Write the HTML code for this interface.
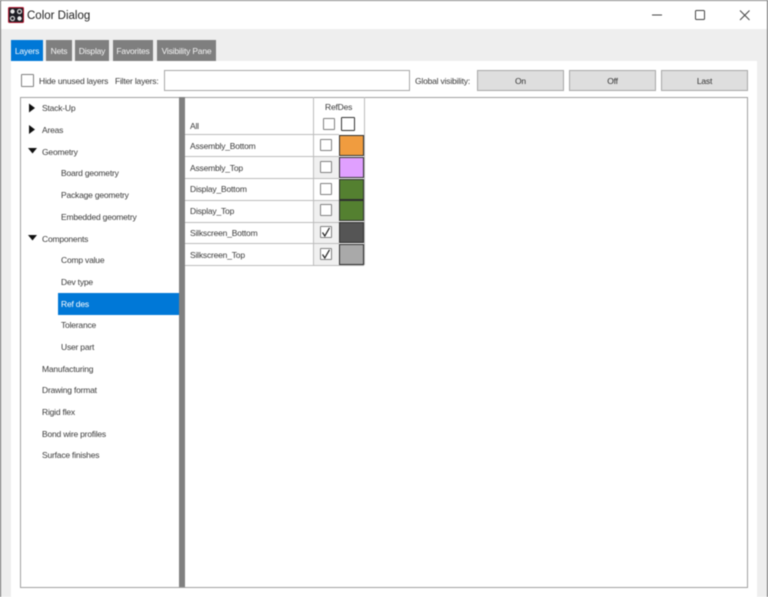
<!DOCTYPE html>
<html>
<head>
<meta charset="utf-8">
<title>Color Dialog</title>
<style>
html,body{margin:0;padding:0;width:768px;height:597px;overflow:hidden;background:#fff}
body{position:relative;font-family:"Liberation Sans",sans-serif;font-size:8.5px;letter-spacing:-.2px;color:#3a3a3a}
div,span,svg{position:absolute;box-sizing:border-box}
#w{left:0;top:0;width:768px;height:597px;background:#fff;filter:blur(.4px)}
.t{white-space:nowrap;line-height:12px}
.tab{top:40px;height:21px;background:#7f7f7f;color:#f4f4f4;text-align:center;line-height:22px}
.btn{top:70px;height:21px;background:#dedede;border:1px solid #a8a8a8;text-align:center;line-height:20px;color:#333}
.cb{width:12px;height:12px;background:#fff;border:1px solid #808080;border-radius:1px}
.line{background:#bcbcbc}
.sw{left:339px;width:24.500px;height:21px;border:1.5px solid #2f2f2f}
.cell{left:314px;width:25px;height:21px;background:#f0f0f0}
</style>
</head>
<body>
<div id="w">
<!-- window chrome -->
<div style="left:0;top:29px;width:768px;height:568px;background:#eee"></div>
<div style="left:0;top:0;width:768px;height:1px;background:#8a8a8a"></div>
<div style="left:0;top:0;width:1px;height:597px;background:#666"></div>
<div style="left:767px;top:0;width:1px;height:597px;background:#666"></div>

<svg style="left:8px;top:7px" width="16" height="16" viewBox="0 0 16 16">
<rect width="16" height="16" rx="1.500" fill="#b5172f"/>
<rect x="1" y="1" width="14" height="14" fill="#1d1d24"/>
<circle cx="4.500" cy="4.500" r="2.200" fill="#e8e8e8"/><circle cx="11.500" cy="11.500" r="2.200" fill="#e8e8e8"/>
<circle cx="11.500" cy="4.500" r="2" fill="none" stroke="#d8d8d8" stroke-width="1.200"/><circle cx="4.500" cy="11.500" r="2" fill="none" stroke="#d8d8d8" stroke-width="1.200"/>
</svg>
<div class="t" style="left:27px;top:9px;font-size:11.5px;letter-spacing:0;line-height:14px;color:#222">Color Dialog</div>

<svg style="left:640px;top:5px" width="120" height="20" viewBox="0 0 120 20" fill="none" stroke="#444" stroke-width="1">
<path d="M12 10H22"/>
<rect x="55.500" y="5.500" width="9" height="9" rx="1"/>
<path d="M100 5.500L109.500 15M109.500 5.500L100 15"/>
</svg>

<!-- main panel -->
<div style="left:11px;top:61px;width:746px;height:536px;background:#fff"></div>

<!-- tabs -->
<div class="tab" style="left:11px;width:32px;background:#0078d7;color:#f4f9fd">Layers</div>
<div class="tab" style="left:46px;width:26px">Nets</div>
<div class="tab" style="left:75px;width:34px">Display</div>
<div class="tab" style="left:113px;width:40px">Favorites</div>
<div class="tab" style="left:157px;width:59px">Visibility Pane</div>

<!-- toolbar -->
<div class="cb" style="left:21px;top:74px;width:13px;height:13px"></div>
<div class="t" style="left:39px;top:75px">Hide unused layers</div>
<div class="t" style="left:115px;top:75px">Filter layers:</div>
<div style="left:164px;top:70px;width:246px;height:21px;background:#fff;border:1px solid #a8a8a8"></div>
<div class="t" style="left:415px;top:75px">Global visibility:</div>
<div class="btn" style="left:477px;width:87px">On</div>
<div class="btn" style="left:569px;width:87px">Off</div>
<div class="btn" style="left:661px;width:87px">Last</div>

<!-- content frame -->
<div style="left:20px;top:97px;width:728px;height:491px;background:#fff;border:1px solid #a0a0a0"></div>
<div style="left:179px;top:97px;width:6px;height:490px;background:#808080"></div>

<!-- tree -->
<svg style="left:28px;top:103px" width="12" height="140" viewBox="0 0 12 140" fill="#111">
<path d="M1 0.500L7 5L1 9.500Z"/>
<path d="M1 22L7 26.500L1 31Z"/>
<path d="M0 45H9L4.500 50.500Z"/>
<path d="M0 132H9L4.500 137.500Z"/>
</svg>
<div class="t" style="left:42px;top:102px">Stack-Up</div>
<div class="t" style="left:42px;top:124px">Areas</div>
<div class="t" style="left:42px;top:146px">Geometry</div>
<div class="t" style="left:61px;top:167px">Board geometry</div>
<div class="t" style="left:61px;top:189px">Package geometry</div>
<div class="t" style="left:61px;top:211px">Embedded geometry</div>
<div class="t" style="left:42px;top:233px">Components</div>
<div class="t" style="left:61px;top:254px">Comp value</div>
<div class="t" style="left:61px;top:276px">Dev type</div>
<div style="left:58px;top:293px;width:121px;height:22px;background:#0078d7"></div>
<div class="t" style="left:61px;top:298px;color:#fff">Ref des</div>
<div class="t" style="left:61px;top:319px">Tolerance</div>
<div class="t" style="left:61px;top:341px">User part</div>
<div class="t" style="left:42px;top:363px">Manufacturing</div>
<div class="t" style="left:42px;top:384px">Drawing format</div>
<div class="t" style="left:42px;top:406px">Rigid flex</div>
<div class="t" style="left:42px;top:428px">Bond wire profiles</div>
<div class="t" style="left:42px;top:449px">Surface finishes</div>

<!-- table -->
<div class="cell" style="top:157px"></div>
<div class="cell" style="top:201px"></div>
<div class="cell" style="top:223px"></div>
<div class="cell" style="top:244px"></div>

<div class="sw" style="top:135px;background:#f09c3f"></div>
<div class="sw" style="top:157px;background:#e0a0ff"></div>
<div class="sw" style="top:179px;background:#548030"></div>
<div class="sw" style="top:200px;background:#548030"></div>
<div class="sw" style="top:222px;background:#555555"></div>
<div class="sw" style="top:244px;background:#a9a9a9"></div>

<div class="line" style="left:185px;top:134px;width:154px;height:1px"></div>
<div class="line" style="left:185px;top:156px;width:154px;height:1px"></div>
<div class="line" style="left:185px;top:178px;width:154px;height:1px"></div>
<div class="line" style="left:185px;top:200px;width:154px;height:1px"></div>
<div class="line" style="left:185px;top:222px;width:154px;height:1px"></div>
<div class="line" style="left:185px;top:243px;width:154px;height:1px"></div>
<div class="line" style="left:185px;top:265px;width:179px;height:1px"></div>
<div class="line" style="left:313px;top:97px;width:1px;height:168px"></div>
<div class="line" style="left:364px;top:97px;width:1px;height:168px"></div>

<div class="t" style="left:325px;top:101px">RefDes</div>
<div class="t" style="left:190px;top:120px">All</div>
<div class="cb" style="left:323px;top:118px"></div>
<div class="cb" style="left:341px;top:117px;width:14px;height:14px;border-color:#333"></div>

<div class="t" style="left:190px;top:140px">Assembly_Bottom</div>
<div class="t" style="left:190px;top:162px">Assembly_Top</div>
<div class="t" style="left:190px;top:183px">Display_Bottom</div>
<div class="t" style="left:190px;top:205px">Display_Top</div>
<div class="t" style="left:190px;top:227px">Silkscreen_Bottom</div>
<div class="t" style="left:190px;top:249px">Silkscreen_Top</div>

<div class="cb" style="left:320px;top:139px"></div>
<div class="cb" style="left:320px;top:161px"></div>
<div class="cb" style="left:320px;top:183px"></div>
<div class="cb" style="left:320px;top:204px"></div>
<div class="cb" style="left:320px;top:226px"></div>
<div class="cb" style="left:320px;top:248px"></div>
<svg style="left:320px;top:226px" width="12" height="34" viewBox="0 0 12 34" fill="none" stroke="#222" stroke-width="1.200">
<path d="M2.500 6.500L4.800 10L9.500 1.800"/>
<path d="M2.500 28.500L4.800 32L9.500 23.800"/>
</svg>
</div>
</body>
</html>
